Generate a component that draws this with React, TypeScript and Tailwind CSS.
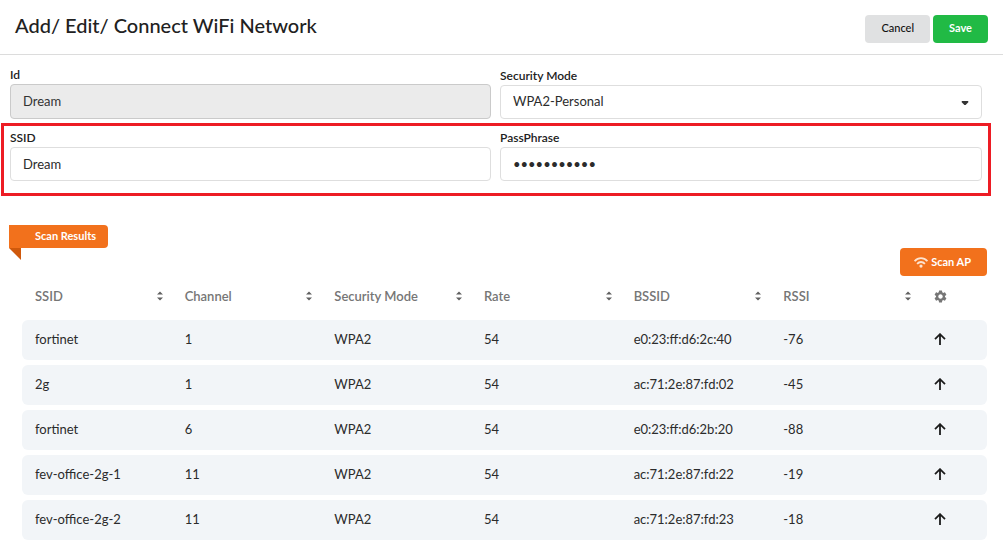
import React from "react";
import { MdSettings } from "react-icons/md";

type Network = { ssid: string; channel: number; security: string; rate: number; bssid: string; rssi: number };

const networks: Network[] = [
  { ssid: "fortinet", channel: 1, security: "WPA2", rate: 54, bssid: "e0:23:ff:d6:2c:40", rssi: -76 },
  { ssid: "2g", channel: 1, security: "WPA2", rate: 54, bssid: "ac:71:2e:87:fd:02", rssi: -45 },
  { ssid: "fortinet", channel: 6, security: "WPA2", rate: 54, bssid: "e0:23:ff:d6:2b:20", rssi: -88 },
  { ssid: "fev-office-2g-1", channel: 11, security: "WPA2", rate: 54, bssid: "ac:71:2e:87:fd:22", rssi: -19 },
  { ssid: "fev-office-2g-2", channel: 11, security: "WPA2", rate: 54, bssid: "ac:71:2e:87:fd:23", rssi: -18 },
];

const columns = ["SSID", "Channel", "Security Mode", "Rate", "BSSID", "RSSI"];

const label = "text-xs leading-4 font-semibold text-[#212121]";
const field = "h-[34px] w-full rounded-sm border border-[#dedede] bg-white px-3 text-[13px] text-[#2b2b2b]";
const cell = "px-[13px] text-[13px] text-[#2b2b2b]";

function SortIcon() {
  return (
    <svg width="8" height="10" viewBox="0 0 8 10" fill="#606060" aria-hidden="true">
      <path d="M4 0.6 7 3.6H1zM4 9.4 1 6.4h6z" />
    </svg>
  );
}

function WifiIcon() {
  return (
    <svg width="14" height="11" viewBox="0 0 14 11" fill="none" stroke="#fde3d0" strokeWidth="1.8" aria-hidden="true">
      <path d="M0.6 4.2C4.2.2 9.8.2 13.4 4.2" />
      <path d="M3.1 6.8C5.3 4.4 8.7 4.4 10.9 6.8" />
      <circle cx="7" cy="9.1" r="1.6" fill="#fde3d0" stroke="none" />
    </svg>
  );
}

function ArrowUpIcon() {
  return (
    <svg width="12" height="12" viewBox="0 0 12 12" fill="none" stroke="#1c1c1c" strokeWidth="1.8" aria-hidden="true">
      <path d="M6 12V1.4M1 6.2 6 1.2l5 5" />
    </svg>
  );
}

export default function App() {
  return (
    <main className="min-h-screen bg-white font-['Lato',sans-serif] text-[#212121]">
      <header className="flex items-center justify-between border-b border-[#dcdcdc] pt-[11px] pr-[15px] pb-[7px] pl-[15px]">
        <h1 className="pb-2 text-xl leading-7 font-medium">Add/ Edit/ Connect WiFi Network</h1>
        <div className="flex gap-[3px]">
          <button type="button" className="h-7 rounded-sm bg-[#e0e1e2] px-4 pb-0.5 text-[11px] font-medium text-[#111]">Cancel</button>
          <button type="submit" form="wifi" className="h-7 rounded-sm bg-[#21ba45] px-4 pb-0.5 text-[11px] font-bold text-white">Save</button>
        </div>
      </header>

      <form id="wifi">
        <div className="grid grid-cols-[481fr_482fr] items-end gap-[9px] pt-3 pr-[21px] pl-[10px]">
          <div className="flex flex-col gap-px">
            <label htmlFor="id" className={label}>Id</label>
            <input id="id" readOnly defaultValue="Dream" className="h-[35px] w-full rounded-sm border border-[#cacaca] bg-[#ebebeb] px-3 pb-0.5 text-[13px] text-[#333]" />
          </div>
          <div className="flex flex-col gap-px">
            <label htmlFor="mode" className={label}>Security Mode</label>
            <div className="relative">
              <select id="mode" defaultValue="WPA2-Personal" className={field + " block appearance-none"}>
                <option>WPA2-Personal</option>
              </select>
              <svg className="pointer-events-none absolute top-4 right-[13px]" width="8" height="4" viewBox="0 0 8 4" fill="#333" aria-hidden="true">
                <path d="M1 0h6l.5 1L4.6 4H3.4L.5 1z" />
              </svg>
            </div>
          </div>
        </div>

        <div className="mt-1 mr-3 ml-px grid grid-cols-[481fr_482fr] gap-[9px] border-3 border-[#ed1c24] px-1.5 pt-1 pb-3">
          <div className="flex flex-col gap-px">
            <label htmlFor="ssid" className={label}>SSID</label>
            <input id="ssid" defaultValue="Dream" className={field} />
          </div>
          <div className="flex flex-col gap-px">
            <label htmlFor="pass" className={label}>PassPhrase</label>
            <input id="pass" type="password" defaultValue="abcdefghijk" className={field} />
          </div>
        </div>
      </form>

      <section className="mt-[29px] pr-4 pl-[9px]">
        <h2 className="relative h-[23px] w-fit rounded-r-sm bg-[#f2711c] pr-3 pl-[26px] text-[11px] leading-[22px] font-bold text-white">
          Scan Results
          <svg className="absolute top-full left-0" width="12" height="12" viewBox="0 0 12 12" fill="#cf590c" aria-hidden="true">
            <path d="M0 0h12v12z" />
          </svg>
        </h2>
        <div className="flex justify-end">
          <button type="button" className="flex h-7 items-center gap-[3px] rounded-sm bg-[#f2711c] pr-4 pl-[14px] text-[11px] font-bold text-white">
            <WifiIcon />
            Scan AP
          </button>
        </div>

        <div className="pl-[13px]">
          <table className="w-full table-fixed border-separate border-spacing-x-0 border-spacing-y-[5px] text-left">
            <thead>
              <tr className="h-[34px] align-top text-[#767676]">
                {columns.map((name) => (
                  <th key={name} scope="col" className="pt-[5px] pr-2 pl-[13px] text-[13px] leading-5 font-semibold">
                    <div className="flex items-center justify-between">
                      {name}
                      <button type="button" aria-label={"Sort by " + name}><SortIcon /></button>
                    </div>
                  </th>
                ))}
                <th scope="col" className="w-[67px] pt-2 pl-[13px]">
                  <button type="button" aria-label="Table settings" className="block"><MdSettings size={15} color="#767676" /></button>
                </th>
              </tr>
            </thead>
            <tbody>
              {networks.map((n) => (
                <tr key={n.bssid} className="h-10 bg-[#f2f5f8]">
                  <td className={cell + " rounded-l-md"}>{n.ssid}</td>
                  <td className={cell}>{n.channel}</td>
                  <td className={cell}>{n.security}</td>
                  <td className={cell}>{n.rate}</td>
                  <td className={cell}>{n.bssid}</td>
                  <td className={cell}>{n.rssi}</td>
                  <td className="rounded-r-md pb-0.5 pl-[14px]">
                    <button type="button" aria-label={"Use " + n.ssid} className="block"><ArrowUpIcon /></button>
                  </td>
                </tr>
              ))}
            </tbody>
          </table>
        </div>
      </section>
    </main>
  );
}
